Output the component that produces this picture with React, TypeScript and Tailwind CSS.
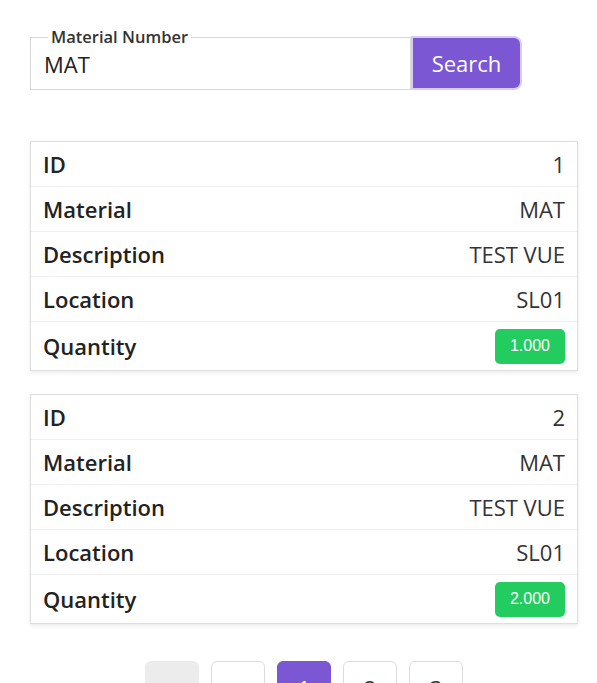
import React from "react";

type Item = {
    id: number;
    material: string;
    description: string;
    location: string;
    quantity: string;
};

const items: Item[] = [
    { id: 1, material: "MAT", description: "TEST VUE", location: "SL01", quantity: "1.000" },
    { id: 2, material: "MAT", description: "TEST VUE", location: "SL01", quantity: "2.000" },
];

const font = { fontFamily: '"Open Sans", "Noto Sans", sans-serif' };

export default function App() {
    return (
        <main className="min-h-screen bg-white text-[#222]" style={font}>
            <div className="px-[30px] pt-[37px]">
                {/* SEARCH */}
                <div className="flex items-start">
                    <div className="relative h-[53px] w-[381px] border border-[#d9d9d9] pl-[13px]">
                        <span className="absolute left-[17px] top-[-12px] bg-white px-[3px] text-[16.5px] font-semibold leading-[22px] text-[#333]">
                            Material Number
                        </span>
                        <div className="pt-[11px] text-[22px] leading-[30px] text-[#222]">MAT</div>
                    </div>
                    <button className="ml-[2px] mt-[1px] h-[50px] w-[107px] rounded-r-[6px] bg-[#7b57d3] text-[22px] text-white ring-2 ring-[#d6cbf5]">
                        Search
                    </button>
                </div>

                {/* RESULTS */}
                <div className="mt-[51px] flex w-[548px] flex-col gap-[23px]">
                    {items.map((it) => (
                        <ItemCard key={it.id} item={it} />
                    ))}
                </div>

                {/* PAGINATION */}
                <div className="mt-[37px] flex justify-center gap-[12px] pl-[11px]">
                    <PageBtn label="«" variant="disabled" />
                    <PageBtn label="‹" variant="plain" />
                    <PageBtn label="1" variant="active" />
                    <PageBtn label="2" variant="plain" />
                    <PageBtn label="3" variant="plain" />
                </div>
            </div>
        </main>
    );
}

function ItemCard({ item }: { item: Item }) {
    const rows: [string, React.ReactNode][] = [
        ["ID", item.id],
        ["Material", item.material],
        ["Description", item.description],
        ["Location", item.location],
        [
            "Quantity",
            <span
                className="inline-flex h-[35px] w-[70px] items-center justify-center rounded-[5px] bg-[#22cc5f] text-[16px] text-white"
                style={{ fontFamily: '"Liberation Sans", Arial, sans-serif' }}
            >
                {item.quantity}
            </span>,
        ],
    ];
    return (
        <div className="border border-[#dedede] shadow-[0_2px_4px_rgba(0,0,0,0.08)]">
            {rows.map(([label, value], i) => (
                <div
                    key={label}
                    className={
                        "flex items-center justify-between px-[12px] " +
                        (i < rows.length - 1 ? "h-[45px] border-b border-[#f0f0f0]" : "h-[48px]")
                    }
                >
                    <span className="text-[22px] font-semibold leading-none">{label}</span>
                    <span className="text-[22px] leading-none text-[#333]">{value}</span>
                </div>
            ))}
        </div>
    );
}

function PageBtn({ label, variant }: { label: string; variant: "disabled" | "plain" | "active" }) {
    const cls =
        variant === "active"
            ? "bg-[#7b57d3] border-[#7b57d3] text-white"
            : variant === "disabled"
              ? "bg-[#ececec] border-[#ececec] text-[#999]"
              : "bg-white border-[#dcdcdc] text-[#333]";
    return (
        <div
            className={
                "flex h-[54px] w-[54px] items-center justify-center rounded-[6px] border text-[22px] " + cls
            }
        >
            {label}
        </div>
    );
}
